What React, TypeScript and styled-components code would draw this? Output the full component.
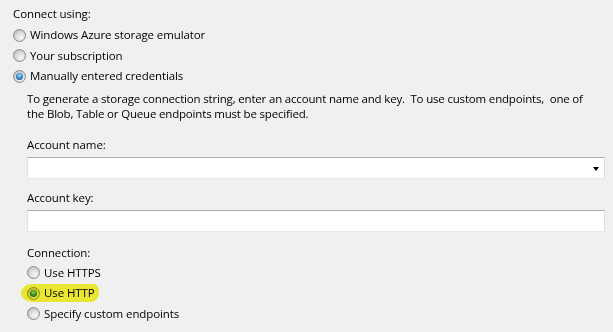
import React from "react";
import styled, { createGlobalStyle } from "styled-components";

const GlobalStyle = createGlobalStyle`
  html, body {
    margin: 0;
    padding: 0;
    background: #f0f0f0;
  }
  body {
    font-family: "Open Sans", "Noto Sans", "DejaVu Sans", sans-serif;
    font-size: 11.5px;
    letter-spacing: -0.1px;
    color: #000;
  }
`;

const Page = styled.div`
  width: 613px;
  height: 332px;
  box-sizing: border-box;
  padding: 6px 8px 0 13px;
  background: #f0f0f0;
  overflow: hidden;
`;

const Heading = styled.div`
  line-height: 16px;
  height: 16px;
  margin-bottom: 3px;
`;

const RadioList = styled.div`
  display: flex;
  flex-direction: column;
`;

const RadioRow = styled.div`
  position: relative;
  display: flex;
  align-items: center;
  gap: 4px;
  height: 20.5px;
  line-height: 16px;
  white-space: nowrap;
`;

const RadioCircle = styled.span<{ checked?: boolean }>`
  position: relative;
  flex: none;
  width: 13px;
  height: 13px;
  box-sizing: border-box;
  border-radius: 50%;
  border: 1px solid #8a8a8a;
  background: radial-gradient(circle at 65% 70%, #f8f8f8 0%, #e0e0e0 40%, #b4b4b4 100%);
  display: flex;
  align-items: center;
  justify-content: center;

  &::after {
    content: "";
    display: ${(p) => (p.checked ? "block" : "none")};
    width: 7px;
    height: 7px;
    border-radius: 50%;
    background: radial-gradient(circle at 50% 35%, #a8e0ff 0%, #3d8fd0 45%, #174a7c 100%);
  }
`;

const Section = styled.div`
  padding-left: 14px;
  margin-top: 4px;
`;

const Description = styled.p`
  margin: 0;
  line-height: 15px;
  white-space: nowrap;
  letter-spacing: -0.18px;
`;

const FieldLabel = styled.div<{ top?: number; bottom?: number }>`
  line-height: 16px;
  margin-top: ${(p) => p.top ?? 16}px;
  margin-bottom: ${(p) => p.bottom ?? 4}px;
`;

const Field = styled.div`
  position: relative;
  height: 22px;
  box-sizing: border-box;
  background: #fff;
  border: 1px solid #e3e9ef;
  border-top-color: #abadb3;
  border-left-color: #e2e3ea;
  border-right-color: #dbdfe6;
`;

const DropArrow = styled.span`
  position: absolute;
  right: 5px;
  top: 9px;
  width: 0;
  height: 0;
  border-left: 3.5px solid transparent;
  border-right: 3.5px solid transparent;
  border-top: 4px solid #000;
`;

const Highlight = styled.span`
  position: absolute;
  left: -6px;
  top: 1px;
  width: 78px;
  height: 18px;
  border-radius: 10px 6px 8px 11px / 9px 7px 9px 9px;
  background: #f7f536;
  mix-blend-mode: multiply;
  pointer-events: none;
`;

const App = () => {
  return (
    <Page>
      <GlobalStyle />
      <Heading>Connect using:</Heading>
      <RadioList>
        <RadioRow>
          <RadioCircle />
          <span>Windows Azure storage emulator</span>
        </RadioRow>
        <RadioRow>
          <RadioCircle />
          <span>Your subscription</span>
        </RadioRow>
        <RadioRow>
          <RadioCircle checked />
          <span>Manually entered credentials</span>
        </RadioRow>
      </RadioList>
      <Section>
        <Description>
          To generate a storage connection string, enter an account name and key.&nbsp; To use custom endpoints,&nbsp; one of
          <br />
          the Blob, Table or Queue endpoints must be specified.
        </Description>
        <FieldLabel top={16}>Account name:</FieldLabel>
        <Field>
          <DropArrow />
        </Field>
        <FieldLabel top={11}>Account key:</FieldLabel>
        <Field />
        <FieldLabel top={13} bottom={2}>Connection:</FieldLabel>
        <RadioList>
          <RadioRow>
            <RadioCircle />
            <span>Use HTTPS</span>
          </RadioRow>
          <RadioRow>
            <RadioCircle checked />
            <span>Use HTTP</span>
            <Highlight />
          </RadioRow>
          <RadioRow>
            <RadioCircle />
            <span>Specify custom endpoints</span>
          </RadioRow>
        </RadioList>
      </Section>
    </Page>
  );
};

export default App;
